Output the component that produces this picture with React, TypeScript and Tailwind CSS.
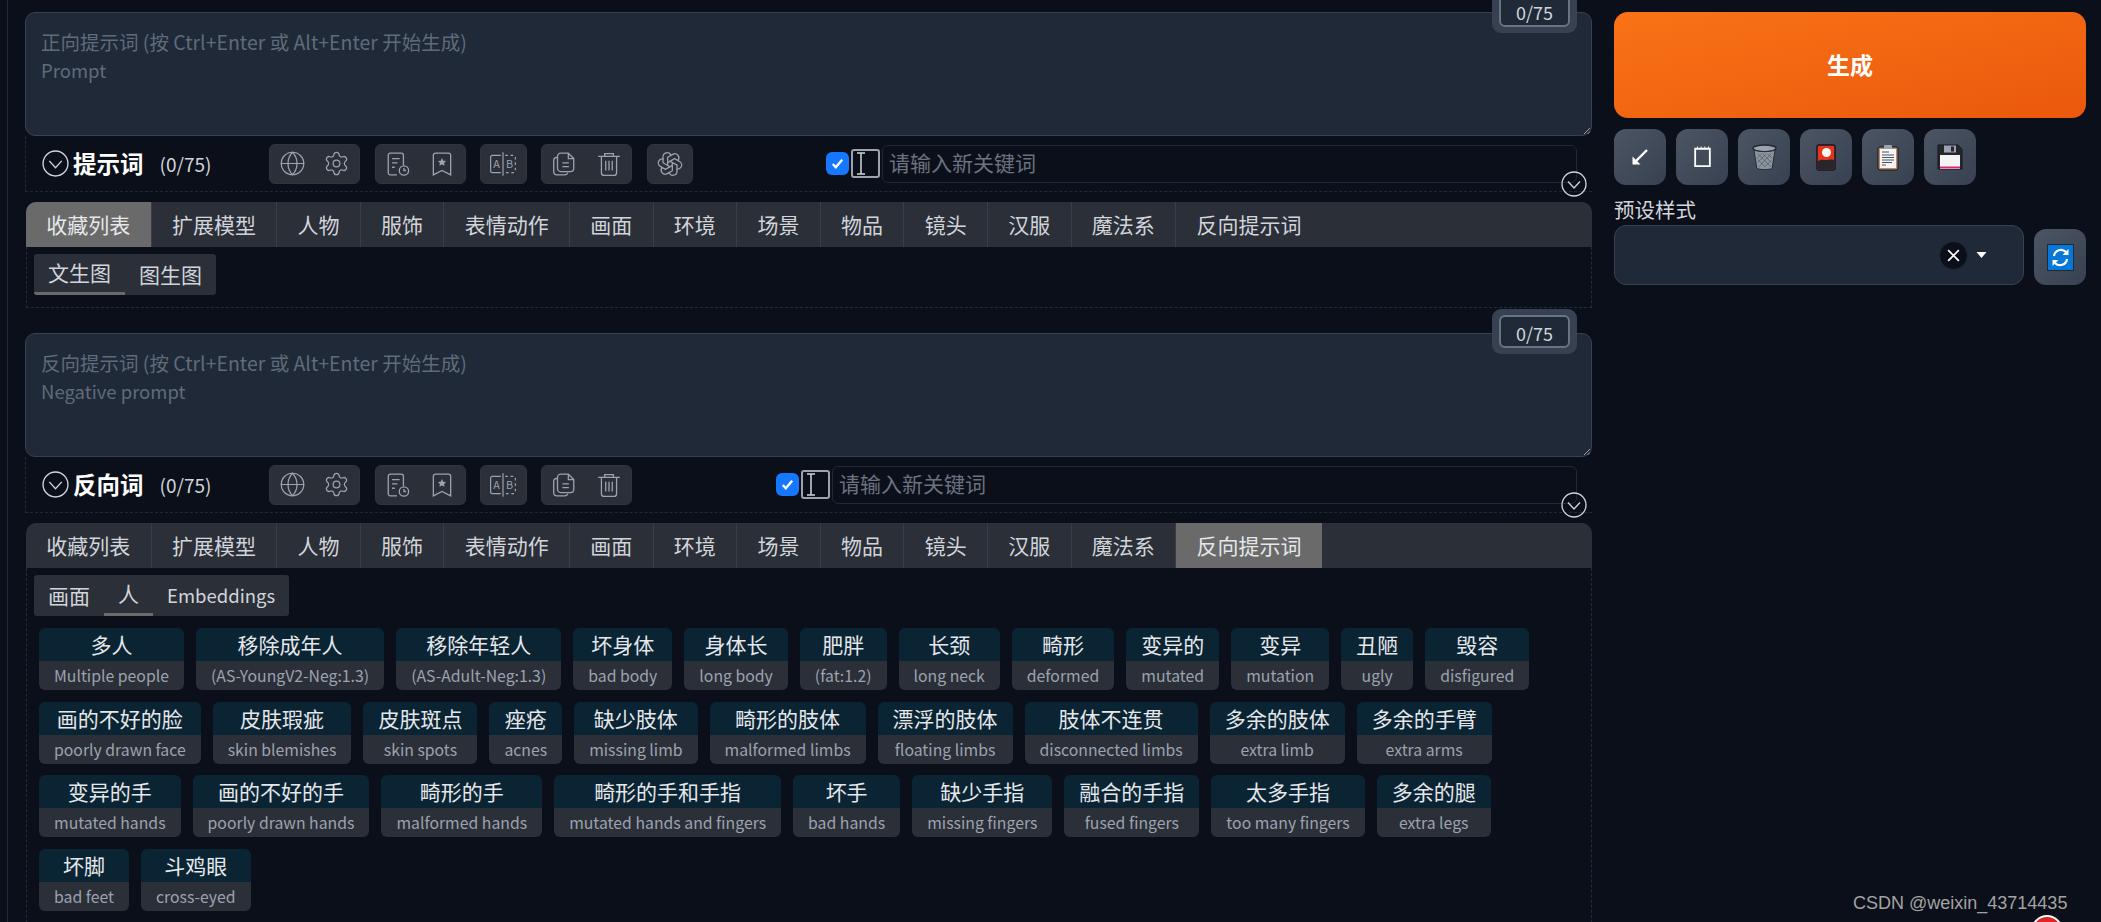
import { Globe, Settings } from 'lucide-react';
import { TbBrandOpenai } from 'react-icons/tb';

const categoryTabs = ['收藏列表', '扩展模型', '人物', '服饰', '表情动作', '画面', '环境', '场景', '物品', '镜头', '汉服', '魔法系', '反向提示词'];

const tagRows = [
  ['多人', 'Multiple people'], ['移除成年人', '(AS-YoungV2-Neg:1.3)'], ['移除年轻人', '(AS-Adult-Neg:1.3)'], ['坏身体', 'bad body'],
  ['身体长', 'long body'], ['肥胖', '(fat:1.2)'], ['长颈', 'long neck'], ['畸形', 'deformed'], ['变异的', 'mutated'], ['变异', 'mutation'],
  ['丑陋', 'ugly'], ['毁容', 'disfigured'],
  ['画的不好的脸', 'poorly drawn face'], ['皮肤瑕疵', 'skin blemishes'], ['皮肤斑点', 'skin spots'], ['痤疮', 'acnes'], ['缺少肢体', 'missing limb'],
  ['畸形的肢体', 'malformed limbs'], ['漂浮的肢体', 'floating limbs'], ['肢体不连贯', 'disconnected limbs'], ['多余的肢体', 'extra limb'], ['多余的手臂', 'extra arms'],
  ['变异的手', 'mutated hands'], ['画的不好的手', 'poorly drawn hands'], ['畸形的手', 'malformed hands'], ['畸形的手和手指', 'mutated hands and fingers'],
  ['坏手', 'bad hands'], ['缺少手指', 'missing fingers'], ['融合的手指', 'fused fingers'], ['太多手指', 'too many fingers'], ['多余的腿', 'extra legs'],
  ['坏脚', 'bad feet'], ['斗鸡眼', 'cross-eyed'],
];

const Chevron = ({ className }: { className: string }) => (
  <svg viewBox="0 0 26 26" className={className} fill="none" stroke="currentColor" strokeWidth="1.3">
    <circle cx="13" cy="13" r="12" />
    <path d="M7 10.5l6 6.5 6-6.5" />
  </svg>
);

const FileClock = () => (
  <svg viewBox="0 0 24 24" className="w-[26px] h-[26px]" fill="none" stroke="currentColor" strokeWidth="1.2">
    <path d="M11 22H5a2 2 0 0 1-2-2V4a2 2 0 0 1 2-2h10a2 2 0 0 1 2 2v9" />
    <path d="M6.5 7h7M6.5 11h5M6.5 15h2.5" />
    <circle cx="17.5" cy="18" r="4.3" />
    <path d="M17.5 15.8V18h2" />
  </svg>
);

const BookmarkStar = () => (
  <svg viewBox="0 0 24 24" className="w-[26px] h-[26px]" fill="none" stroke="currentColor" strokeWidth="1.2">
    <path d="M4 4a2 2 0 0 1 2-2h12a2 2 0 0 1 2 2v18l-8-4-8 4z" />
    <path d="M12 6.5l1.2 2.5 2.6.3-1.9 1.8.5 2.6-2.4-1.3-2.4 1.3.5-2.6-1.9-1.8 2.6-.3z" fill="currentColor" stroke="none" />
  </svg>
);

const SplitAB = () => (
  <svg viewBox="0 0 26 24" className="w-[28px] h-[26px]" fill="none" stroke="currentColor" strokeWidth="1.1">
    <path d="M13 1v22" />
    <path d="M11 4H3a1.5 1.5 0 0 0-1.5 1.500v13A1.500 1.500 0 0 0 3 20h8" />
    <path d="M15 4h8a1.500 1.500 0 0 1 1.500 1.500v13a1.500 1.500 0 0 1-1.500 1.500h-8" strokeDasharray="2.500 2.500" />
    <text x="7" y="16" textAnchor="middle" fontSize="10" fill="currentColor" stroke="none">A</text>
    <text x="19" y="16" textAnchor="middle" fontSize="10" fill="currentColor" stroke="none">B</text>
  </svg>
);

const FilesIcon = () => (
  <svg viewBox="0 0 24 24" className="w-[26px] h-[26px]" fill="none" stroke="currentColor" strokeWidth="1.2">
    <path d="M9 2h7l5 5v9a3 3 0 0 1-3 3H9a3 3 0 0 1-3-3V5a3 3 0 0 1 3-3z" />
    <path d="M16 2v5h5M10.500 11h6M10.500 14.500h6" />
    <path d="M6 6H5a2.500 2.500 0 0 0-2.500 2.500V19A3 3 0 0 0 5.500 22H13a3 3 0 0 0 2.500-2" />
  </svg>
);

const TrashIcon = () => (
  <svg viewBox="0 0 24 24" className="w-[26px] h-[26px]" fill="none" stroke="currentColor" strokeWidth="1.2">
    <path d="M2 5h20M8 5V2.500h8V5" />
    <path d="M5 5v15a2.500 2.500 0 0 0 2.500 2.500h9A2.500 2.500 0 0 0 19 20V5" />
    <path d="M9 9v9M12 9v9M15 9v9" />
  </svg>
);

const ToolBtn = ({ children }: { children: React.ReactNode }) => (
  <div className="w-[44.500px] h-full flex items-center justify-center text-[#9ca3af]">{children}</div>
);

const ToolGroup = ({ children }: { children: React.ReactNode }) => (
  <div className="flex h-[40px] rounded-[6px] bg-[#2b2f38] border border-[#30343e]">{children}</div>
);

const Section = ({
  title, placeholder, english, inputWidth, activeTab, subTabs, activeSub, showOpenAi, panelClass, children,
}: {
  title: string;
  placeholder: string;
  english: string;
  inputWidth: string;
  activeTab: number;
  subTabs: string[];
  activeSub: number;
  showOpenAi?: boolean;
  panelClass: string;
  children?: React.ReactNode;
}) => (
  <section>
    <div className="relative">
      <div className="h-[124px] rounded-[10px] bg-[#1f2937] border border-[#374151] pl-[15px] pt-[15px] text-[19.500px] leading-[28px] text-[#5f6b7c]">
        <div>{placeholder}</div>
        <div className="text-[18.500px]">{english}</div>
      </div>
      <svg viewBox="0 0 8 8" className="absolute right-[1px] bottom-[1px] w-[8px] h-[8px] text-[#9ca3af]" fill="none" stroke="currentColor" strokeWidth="1">
        <path d="M1 7l6-6M4.500 7L7 4.500" />
      </svg>
      <div className="absolute right-[15px] top-[-24px] w-[85px] h-[45px] rounded-[9px] bg-[#374151] p-[6px_7px]">
        <div className="h-full rounded-[6px] bg-[#1f2937] border-2 border-[#6b7280] flex items-center justify-center pt-[2px] text-[18px] leading-[18px] text-[#d1d5db]">
          <span>0/75</span>
        </div>
      </div>
    </div>

    <div className="relative flex items-center h-[56px] border-l border-b border-dashed border-[#1f2937] pr-[15px]">
      <div className="w-[243px] flex items-center pl-[16px] text-white">
        <Chevron className="w-[27px] h-[27px] text-[#d1d5db] shrink-0" />
        <span className="ml-[4px] text-[23.500px] font-bold leading-none">{title}</span>
        <span className="ml-[16px] text-[19px] leading-none text-[#d1d5db]">(0/75)</span>
      </div>
      <div className="flex gap-[14.500px]">
        <ToolGroup>
          <ToolBtn><Globe className="w-[27px] h-[27px]" strokeWidth={1.1} /></ToolBtn>
          <ToolBtn><Settings className="w-[27px] h-[27px]" strokeWidth={1.1} /></ToolBtn>
        </ToolGroup>
        <ToolGroup>
          <ToolBtn><FileClock /></ToolBtn>
          <ToolBtn><BookmarkStar /></ToolBtn>
        </ToolGroup>
        <ToolGroup>
          <ToolBtn><SplitAB /></ToolBtn>
        </ToolGroup>
        <ToolGroup>
          <ToolBtn><FilesIcon /></ToolBtn>
          <ToolBtn><TrashIcon /></ToolBtn>
        </ToolGroup>
        {showOpenAi && (
          <ToolGroup>
            <ToolBtn><TbBrandOpenai className="w-[28px] h-[28px]" style={{ strokeWidth: 1.1 }} /></ToolBtn>
          </ToolGroup>
        )}
      </div>
      <div className="ml-auto flex items-center gap-[2px]">
        <div className="w-[23px] h-[23px] rounded-[6px] bg-[#1677ff] flex items-center justify-center">
          <svg viewBox="0 0 16 16" className="w-[15px] h-[15px]" fill="none" stroke="white" strokeWidth="2.600">
            <path d="M3 8.500l3.200 3.500L13 4" />
          </svg>
        </div>
        <div className="w-[29px] h-[29px] rounded-[3px] border-2 border-[#9ca3af] flex items-center pl-[3px]">
          <svg viewBox="0 0 10 24" className="w-[10px] h-[25px] text-[#d1d5db]" fill="none" stroke="currentColor" strokeWidth="1.500">
            <path d="M1 1.500h8M1 22.500h8M5 1.500v21" />
          </svg>
        </div>
        <div className={`${inputWidth} h-[38px] rounded-[6px] border border-[#1f2937] pl-[6px] pb-[2px] flex items-center text-[21px] text-[#6b7280]`}>
          请输入新关键词
        </div>
      </div>
      <Chevron className="absolute right-[5px] bottom-[-6px] w-[26px] h-[26px] text-[#d1d5db]" />
    </div>

    <div className="mt-[10px] ml-[1px] flex h-[45px] rounded-t-[10px] bg-[#2b2f38] overflow-hidden">
      {categoryTabs.map((tab, i) => (
        <div
          key={tab}
          className={`flex items-center px-[20.300px] text-[21px] border-r border-[#3a3e48] last:border-r-0 ${i === activeTab ? 'bg-[#6a6a6a] text-[#e5e7eb]' : 'text-[#d1d5db]'}`}
        >
          {tab}
        </div>
      ))}
    </div>

    <div className={`ml-[1px] border-x border-b border-dashed border-[#1f2d3d] px-[7px] pt-[7px] ${panelClass}`}>
      <div className="inline-flex h-[41px] rounded-[3px] bg-[#2b2f38] overflow-hidden">
        {subTabs.map((tab, i) => (
          <div
            key={tab}
            className={`flex items-center px-[14px] ${tab === 'Embeddings' ? 'text-[18.500px]' : 'text-[21px]'} text-[#d1d5db] ${i === activeSub ? 'border-b-[3px] border-[#6a6a6a]' : ''}`}
          >
            {tab}
          </div>
        ))}
      </div>
      {children}
    </div>
  </section>
);

const IconTile = ({ className, children }: { className: string; children: React.ReactNode }) => (
  <div className={`h-[56px] rounded-[12px] bg-linear-to-br from-[#4b5563] to-[#374151] flex items-center justify-center ${className}`}>
    {children}
  </div>
);

export default function App() {
  return (
    <div className="relative h-[922px] overflow-hidden bg-[#0b0f19] font-['Noto_Sans_CJK_SC','Noto_Sans',sans-serif] pl-[7px] flex">
      <div className="flex border-l border-[#1f2937]">
        <main className="w-[1567px] ml-[17px] pt-[12px] flex flex-col gap-[25px]">
          <Section
            title="提示词"
            placeholder="正向提示词 (按 Ctrl+Enter 或 Alt+Enter 开始生成)"
            english="Prompt"
            inputWidth="w-[695px]"
            activeTab={0}
            subTabs={['文生图', '图生图']}
            activeSub={0}
            showOpenAi
            panelClass="h-[61px]"
          />
          <Section
            title="反向词"
            placeholder="反向提示词 (按 Ctrl+Enter 或 Alt+Enter 开始生成)"
            english="Negative prompt"
            inputWidth="w-[745px]"
            activeTab={12}
            subTabs={['画面', '人', 'Embeddings']}
            activeSub={1}
            panelClass="h-[400px]"
          >
            <div className="mt-[12px] ml-[5px] w-[1535px] flex flex-wrap gap-x-[12px] gap-y-[11.500px]">
              {tagRows.map(([zh, en]) => (
                <div key={zh + en} className="rounded-[6px] overflow-hidden text-center">
                  <div className="h-[33px] px-[15px] bg-[#0a2433] text-[21px] leading-[33px] text-[#e5e7eb]">{zh}</div>
                  <div className="h-[29px] px-[15px] bg-[#2b2f38] text-[15.800px] leading-[29px] text-[#9ca3af]">{en}</div>
                </div>
              ))}
            </div>
          </Section>
        </main>
      </div>

      <aside className="w-[472px] ml-[22px] pt-[12px]">
        <div className="h-[106px] rounded-[14px] bg-linear-to-br from-[#f97316] to-[#ea580c] flex items-center justify-center pb-[2px] text-[23px] font-bold text-white">
          生成
        </div>
        <div className="mt-[11px] flex gap-[10px]">
          <IconTile className="w-[52px]">
            <svg viewBox="0 0 20 20" className="w-[20px] h-[20px]" fill="none" stroke="white" strokeWidth="2.400">
              <path d="M17 3L5 15" />
              <path d="M2.500 9.500v8h8z" fill="white" stroke="none" />
            </svg>
          </IconTile>
          <IconTile className="w-[52px]">
            <svg viewBox="0 0 20 24" className="w-[19px] h-[22px]" fill="none" stroke="white" strokeWidth="2">
              <path d="M2 3h16v19H2z" />
              <path d="M4 1.500h1M8 1.500h1M12 1.500h1M16 1.500h1" />
            </svg>
          </IconTile>
          <IconTile className="w-[52px]">
            <svg viewBox="0 0 26 28" className="w-[25px] h-[27px]">
              <ellipse cx="13" cy="4.500" rx="12" ry="3.500" fill="#9ca3af" stroke="#1f2937" strokeWidth="1.500" />
              <path d="M2 6l3 19c.2 2 16 2 16 0l3-19c-3 2.500-19 2.500-22 0z" fill="#8d949c" stroke="#1f2937" strokeWidth="1" />
              <path d="M6 10l14 14M11 10l9 9M16 10l5 5M20 10L7 24M15 10L6 19M10 10l-5 5M6 16l8 8M13 24l7-7" stroke="#4b5563" strokeWidth=".7" />
            </svg>
          </IconTile>
          <IconTile className="w-[52px]">
            <svg viewBox="0 0 20 27" className="w-[20px] h-[27px]">
              <rect x="1" y="1" width="18" height="25" rx="2" fill="#e5341c" stroke="#111827" strokeWidth="1.500" />
              <path d="M2 17c4-2 6-1 8-1s5-1 8 0v8a1 1 0 0 1-1 1H3a1 1 0 0 1-1-1z" fill="#27272a" />
              <circle cx="10.500" cy="8.500" r="4.500" fill="#f5f5f4" />
            </svg>
          </IconTile>
          <IconTile className="w-[52px]">
            <svg viewBox="0 0 22 27" className="w-[22px] h-[27px]">
              <rect x="1" y="3" width="20" height="23" rx="2" fill="#b98a62" stroke="#111827" strokeWidth="1" />
              <rect x="3" y="5" width="16" height="19" fill="#f3f4f6" />
              <rect x="7" y="1" width="8" height="4" rx="1" fill="#9ca3af" />
              <path d="M5 8h7M5 11h12M5 13.500h12M5 16h12M5 18.500h10M5 21h4" stroke="#4b5563" strokeWidth="1" />
            </svg>
          </IconTile>
          <IconTile className="w-[52px]">
            <svg viewBox="0 0 26 26" className="w-[26px] h-[26px]">
              <path d="M1 1h20l4 4v20H1z" fill="#27272a" stroke="#111827" strokeWidth="1" />
              <rect x="7" y="1.500" width="12" height="7" fill="#9ca3af" />
              <rect x="14" y="2.500" width="3" height="5" fill="#27272a" />
              <rect x="3" y="11" width="20" height="14" fill="#f3f4f6" />
              <rect x="3" y="22.500" width="20" height="2" fill="#db2777" />
            </svg>
          </IconTile>
        </div>
        <div className="mt-[10px] h-[30px] text-[20.500px] leading-[28px] text-[#d1d5db]">预设样式</div>
        <div className="flex items-end gap-[10px]">
          <div className="w-[410px] h-[60px] rounded-[12px] bg-[#1f2937] border border-[#374151] flex items-center justify-end pr-[36px]">
            <div className="w-[29px] h-[29px] rounded-full bg-[#0b0f19] border border-[#1f2937] flex items-center justify-center">
              <svg viewBox="0 0 14 14" className="w-[15px] h-[15px]" stroke="white" strokeWidth="1.600">
                <path d="M2 2l10 10M12 2L2 12" />
              </svg>
            </div>
            <svg viewBox="0 0 10 6" className="ml-[8px] w-[11px] h-[6px]" fill="white">
              <path d="M0 0h10L5 6z" />
            </svg>
          </div>
          <IconTile className="w-[52px]">
            <svg viewBox="0 0 27 27" className="w-[27px] h-[27px]">
              <rect x=".5" y=".5" width="26" height="26" fill="#0878d8" stroke="#1f2937" strokeWidth="1" />
              <path d="M7 12a7 7 0 0 1 12-4M20 15a7 7 0 0 1-12 4" fill="none" stroke="white" strokeWidth="2.200" />
              <path d="M21.500 5v6h-6zM5.500 22v-6h6z" fill="white" />
            </svg>
          </IconTile>
        </div>
      </aside>

      <div className="absolute left-[1853px] top-[892px] font-['Liberation_Sans',sans-serif] text-[18px] leading-[22px] text-[#a3a3a3]">
        CSDN @weixin_43714435
      </div>
      <div className="absolute left-[2031px] top-[915px] w-[32px] h-[32px] rounded-full bg-[#dc2626] border-2 border-white" />
    </div>
  );
}
